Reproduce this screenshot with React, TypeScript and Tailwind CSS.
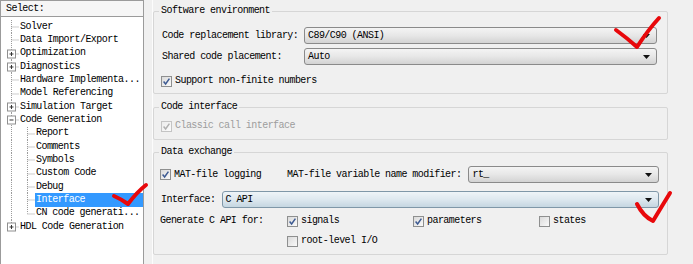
import React from "react";

const FONT = "font-['Liberation_Mono','DejaVu_Sans_Mono',monospace] text-[10px] tracking-[-0.55px] leading-[12px]";

type Box = "+" | "-" | null;

function TopRow({ label, box = null, last = false }: { label: string; box?: Box; last?: boolean }) {
  const h = 13.33;
  const mid = 6.5;
  return (
    <div className="h-[13.33px] flex items-center">
      <svg width="18" height={h} viewBox={`0 0 18 ${h}`} className="shrink-0">
        <line x1="10.5" y1="0" x2="10.5" y2={last ? mid : h} stroke="#9a9a9a" strokeDasharray="1 1" />
        <line x1="10.5" y1={mid + 0.5} x2="18" y2={mid + 0.5} stroke="#9a9a9a" strokeDasharray="1 1" />
        {box && (
          <g>
            <rect x="6.5" y={mid - 3.5} width="8" height="8" fill="#fff" stroke="#8f8f8f" />
            <line x1="8.5" y1={mid + 0.5} x2="12.5" y2={mid + 0.5} stroke="#333" />
            {box === "+" && <line x1="10.5" y1={mid - 1.5} x2="10.5" y2={mid + 2.5} stroke="#333" />}
          </g>
        )}
      </svg>
      <span className="pl-[1px] whitespace-nowrap">{label}</span>
    </div>
  );
}

function ChildRow({ label, last = false, selected = false }: { label: string; last?: boolean; selected?: boolean }) {
  const h = 13.33;
  const mid = 6.5;
  return (
    <div className="h-[13.33px] flex items-stretch">
      <svg width="34" height={h} viewBox={`0 0 34 ${h}`} className="shrink-0">
        <line x1="10.5" y1="0" x2="10.5" y2={h} stroke="#9a9a9a" strokeDasharray="1 1" />
        <line x1="26.5" y1="0" x2="26.5" y2={last ? mid : h} stroke="#9a9a9a" strokeDasharray="1 1" />
        <line x1="26.5" y1={mid + 0.5} x2="34" y2={mid + 0.5} stroke="#9a9a9a" strokeDasharray="1 1" />
      </svg>
      <span
        className={
          selected
            ? "flex-1 pl-[1px] whitespace-nowrap flex items-center bg-[#3399ff] text-white"
            : "flex-1 pl-[1px] whitespace-nowrap flex items-center"
        }
      >
        {label}
      </span>
    </div>
  );
}

function Check({ state }: { state: "on" | "off" | "dis" }) {
  return (
    <span
      className={
        state === "dis"
          ? "w-[11px] h-[11px] shrink-0 border border-[#c4c4c4] bg-linear-to-br from-[#ececec] to-[#fbfbfb] flex items-center justify-center"
          : "w-[11px] h-[11px] shrink-0 border border-[#8e8f8f] bg-linear-to-br from-[#dadada] to-[#fafafa] flex items-center justify-center"
      }
    >
      {state !== "off" && (
        <svg width="9" height="9" viewBox="0 0 9 9">
          <path
            d="M1.6 4.6 L3.6 7 L7.4 1.6"
            stroke={state === "dis" ? "#b0b0b0" : "#3d5a92"}
            strokeWidth="1.5"
            fill="none"
          />
        </svg>
      )}
    </span>
  );
}

function Combo({ text, blue = false }: { text: string; blue?: boolean }) {
  return (
    <div
      className={
        blue
          ? "h-[17px] flex-1 flex items-center justify-between pl-[3px] pr-[6px] rounded-[3px] border border-[#7f97a8] bg-linear-to-b from-[#eef4f8] via-[#dde8ef] to-[#c5d6e1]"
          : "h-[17px] flex-1 flex items-center justify-between pl-[3px] pr-[6px] rounded-[3px] border border-[#8a8a8a] bg-linear-to-b from-[#f4f4f4] via-[#e7e7e7] to-[#d3d3d3]"
      }
    >
      <span className="whitespace-nowrap">{text}</span>
      <svg width="7" height="4" viewBox="0 0 7 4">
        <path d="M0 0H7L3.5 4Z" fill="#111" />
      </svg>
    </div>
  );
}

export default function App() {
  return (
    <div className={`relative w-[693px] h-[264px] overflow-hidden bg-[#f0f0f0] flex text-black ${FONT}`}>
      {/* Left tree panel */}
      <div className="w-[144px] shrink-0 flex flex-col border-l border-r border-[#9b9b9b]">
        <div className="h-[17px] shrink-0 bg-[#f6f6f6] border-t border-b border-[#9b9b9b] pl-[5px] flex items-center pt-[1px]">
          Select:
        </div>
        <div className="flex-1 bg-white pt-[3px]">
          <TopRow label="Solver" />
          <TopRow label="Data Import/Export" />
          <TopRow label="Optimization" box="+" />
          <TopRow label="Diagnostics" box="+" />
          <TopRow label="Hardware Implementa..." />
          <TopRow label="Model Referencing" />
          <TopRow label="Simulation Target" box="+" />
          <TopRow label="Code Generation" box="-" />
          <ChildRow label="Report" />
          <ChildRow label="Comments" />
          <ChildRow label="Symbols" />
          <ChildRow label="Custom Code" />
          <ChildRow label="Debug" />
          <ChildRow label="Interface" selected />
          <ChildRow label="CN code generati..." last />
          <TopRow label="HDL Code Generation" box="+" last />
        </div>
      </div>

      <div className="w-[8px] shrink-0" />

      {/* Right configuration pane */}
      <div className="flex-1 border-l border-[#fcfcfc] pt-[5px] pr-[25px] flex flex-col">
        <fieldset className="border border-[#d6d6d6] rounded-[2px] pl-[7px] pr-[10px] pb-[6px]">
          <legend className="ml-[-2px] px-[2px]">Software environment</legend>
          <div className="pt-[10px] flex flex-col">
            <div className="h-[17px] flex items-center">
              <span className="w-[143px] shrink-0 pl-[1px]">Code replacement library:</span>
              <Combo text="C89/C90 (ANSI)" />
            </div>
            <div className="h-[17px] mt-[4px] flex items-center">
              <span className="w-[143px] shrink-0 pl-[1px]">Shared code placement:</span>
              <Combo text="Auto" />
            </div>
            <div className="h-[12px] mt-[10px] flex items-center gap-[3px]">
              <Check state="on" />
              <span>Support non-finite numbers</span>
            </div>
          </div>
        </fieldset>

        <fieldset className="mt-[7px] border border-[#d6d6d6] rounded-[2px] pl-[7px] pr-[10px] pb-[7px]">
          <legend className="ml-[-2px] px-[2px]">Code interface</legend>
          <div className="pt-[7px] h-[19px] flex items-end">
            <div className="h-[12px] flex items-center gap-[3px] text-[#9d9d9d]">
              <Check state="dis" />
              <span>Classic call interface</span>
            </div>
          </div>
        </fieldset>

        <fieldset className="mt-[6px] border border-[#d6d6d6] rounded-[2px] pl-[6px] pr-[8px] pb-[7px]">
          <legend className="ml-[-1px] px-[2px]">Data exchange</legend>
          <div className="pt-[8px] flex flex-col">
            <div className="h-[17px] flex items-center">
              <div className="w-[127px] shrink-0 flex items-center gap-[3px]">
                <Check state="on" />
                <span>MAT-file logging</span>
              </div>
              <span className="whitespace-nowrap">MAT-file variable name modifier:</span>
              <div className="ml-[7px] flex-1 flex">
                <Combo text="rt_" />
              </div>
            </div>
            <div className="h-[17px] mt-[8px] flex items-center">
              <span className="pl-[1px]">Interface:</span>
              <div className="ml-[6px] flex-1 flex">
                <Combo text="C API" blue />
              </div>
            </div>
            <div className="h-[12px] mt-[7px] flex items-center">
              <span className="w-[127px] shrink-0 pl-[0px]">Generate C API for:</span>
              <div className="w-[126px] shrink-0 flex items-center gap-[3px]">
                <Check state="on" />
                <span>signals</span>
              </div>
              <div className="w-[126px] shrink-0 flex items-center gap-[3px]">
                <Check state="on" />
                <span>parameters</span>
              </div>
              <div className="flex items-center gap-[3px]">
                <Check state="off" />
                <span>states</span>
              </div>
            </div>
            <div className="h-[12px] mt-[8px] flex items-center">
              <span className="w-[127px] shrink-0" />
              <div className="flex items-center gap-[3px]">
                <Check state="off" />
                <span>root-level I/O</span>
              </div>
            </div>
          </div>
        </fieldset>
      </div>

      {/* Hand-drawn red check marks over the screenshot */}
      <svg
        className="absolute inset-0 pointer-events-none"
        width="693"
        height="264"
        viewBox="0 0 693 264"
      >
        <g stroke="#e8080b" strokeWidth="4" fill="none" strokeLinecap="round" strokeLinejoin="round">
          <path d="M114 196 Q121 199 128 204 Q137 192 146 185" />
          <path d="M616 30 Q627 38 637 47 Q648 30 659 18" />
          <path d="M637 204 Q643 216 653 221 Q662 206 670 193" />
        </g>
      </svg>
    </div>
  );
}
